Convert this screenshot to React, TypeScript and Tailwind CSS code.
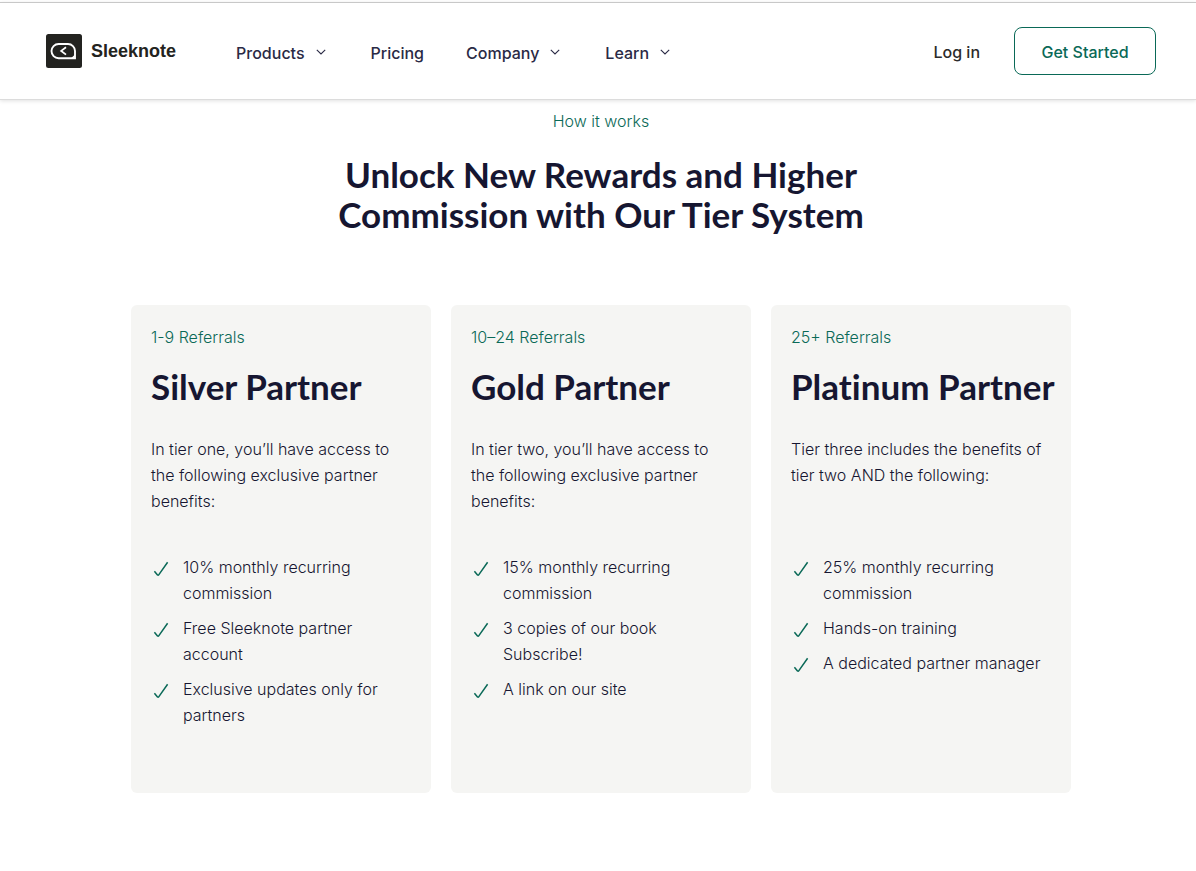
import React from 'react';

interface NavItem {
  label: string
  hasMenu?: boolean
}

interface Tier {
  referrals: string
  name: string
  intro: string
  benefits: string[]
}

const navItems: NavItem[] = [
  { label: "Products", hasMenu: true },
  { label: "Pricing" },
  { label: "Company", hasMenu: true },
  { label: "Learn", hasMenu: true },
]

const tiers: Tier[] = [
  {
    referrals: "1-9 Referrals",
    name: "Silver Partner",
    intro: "In tier one, you’ll have access to the following exclusive partner benefits:",
    benefits: ["10% monthly recurring commission", "Free Sleeknote partner account", "Exclusive updates only for partners"],
  },
  {
    referrals: "10–24 Referrals",
    name: "Gold Partner",
    intro: "In tier two, you’ll have access to the following exclusive partner benefits:",
    benefits: ["15% monthly recurring commission", "3 copies of our book Subscribe!", "A link on our site"],
  },
  {
    referrals: "25+ Referrals",
    name: "Platinum Partner",
    intro: "Tier three includes the benefits of tier two AND the following:",
    benefits: ["25% monthly recurring commission", "Hands-on training", "A dedicated partner manager"],
  },
]

const Logo = () => (
  <a href="#" className="flex items-center gap-[9px] text-[#232320]">
    <svg width="36" height="34" viewBox="0 0 36 34" aria-hidden="true">
      <rect width="36" height="34" rx="2.5" fill="#232320" />
      <path
        d="M12.6 10H22a7 7 0 0 1 7 7v7.2H12.6a7.1 7.1 0 0 1 0-14.2z"
        fill="none"
        stroke="#fff"
        strokeWidth="1.9"
      />
      <path d="M29 20.5v3.7h-4z" fill="#fff" />
      <path d="M20 13.2l-4.8 3.7 4.8 3.7" fill="none" stroke="#fff" strokeWidth="1.8" />
    </svg>
    <span className="font-['Liberation_Sans',Arial,sans-serif] text-lg font-bold leading-6">Sleeknote</span>
  </a>
)

const Chevron = () => (
  <svg width="16" height="16" viewBox="0 0 16 16" fill="none" stroke="currentColor" strokeWidth="1.1" aria-hidden="true">
    <path d="M3.8 4.8l4.2 4.2 4.2-4.2" />
  </svg>
)

const Check = () => (
  <svg className="mt-[5px] shrink-0" width="20" height="20" viewBox="0 0 20 20" fill="none" stroke="#0a6957" strokeWidth="1.5" aria-hidden="true">
    <path d="M3.4 12.2l3.1 3.7c.3.4.9.4 1.2 0L16.6 3.2" />
  </svg>
)

const Header = () => (
  <header className="mt-[2px] flex h-[98px] items-center justify-between border-y border-t-[#c8c8c8] border-b-[#dcdcdc] bg-white pl-[46px] pr-10 shadow-[0_1px_4px_rgba(0,0,0,0.12)]">
    <div className="flex items-center gap-[60px]">
      <Logo />
      <nav className="flex items-center gap-[42px] pt-1 text-base font-medium text-[#2a2a45]">
        {navItems.map((item) =>
          item.hasMenu ? (
            <button key={item.label} className="flex cursor-pointer items-center gap-2">
              {item.label}
              <Chevron />
            </button>
          ) : (
            <a key={item.label} href="#">{item.label}</a>
          )
        )}
      </nav>
    </div>
    <div className="flex items-center gap-[34px] text-base font-medium">
      <a href="#" className="pt-[2px] text-[#2b2b2b]">Log in</a>
      <button className="h-12 w-[142px] cursor-pointer rounded-lg border border-[#0a6957] pt-[2px] text-[#0a6957]">
        Get Started
      </button>
    </div>
  </header>
)

const TierCard = ({ tier }: { tier: Tier }) => (
  <article className="flex min-h-[488px] flex-col rounded-md bg-[#f5f5f3] px-5 pb-16 pt-[19px]">
    <p className="leading-[26px] text-[#0a6957]">{tier.referrals}</p>
    <h3 className="mt-4 whitespace-nowrap font-[Lato,sans-serif] text-[35px] font-bold leading-10 [font-variant-ligatures:none]">{tier.name}</h3>
    <p className="mt-[30px] min-h-[78px] leading-[26px]">{tier.intro}</p>
    <ul className="mt-10 flex flex-col gap-[9px]">
      {tier.benefits.map((benefit) => (
        <li key={benefit} className="flex gap-3 leading-[26px]">
          <Check />
          <span>{benefit}</span>
        </li>
      ))}
    </ul>
  </article>
)

export default function App() {
  return (
    <div className="min-h-screen overflow-hidden bg-white font-[Inter,'Liberation_Sans',sans-serif] text-base font-light text-[#161631]">
      <Header />
      <main className="pb-16 pl-[6px]">
        <section className="mx-auto max-w-[940px]">
          <div className="pt-2 text-center">
            <p className="leading-[26px] text-[#0a6957]">How it works</p>
            <h2 className="mt-5 font-[Lato,sans-serif] text-[35px] font-bold leading-10 [font-variant-ligatures:none]">
              Unlock New Rewards and Higher
              <br />
              Commission with Our Tier System
            </h2>
          </div>
          <div className="mt-[71px] grid grid-cols-3 gap-5">
            {tiers.map((tier) => (
              <TierCard key={tier.name} tier={tier} />
            ))}
          </div>
        </section>
      </main>
    </div>
  )
}
